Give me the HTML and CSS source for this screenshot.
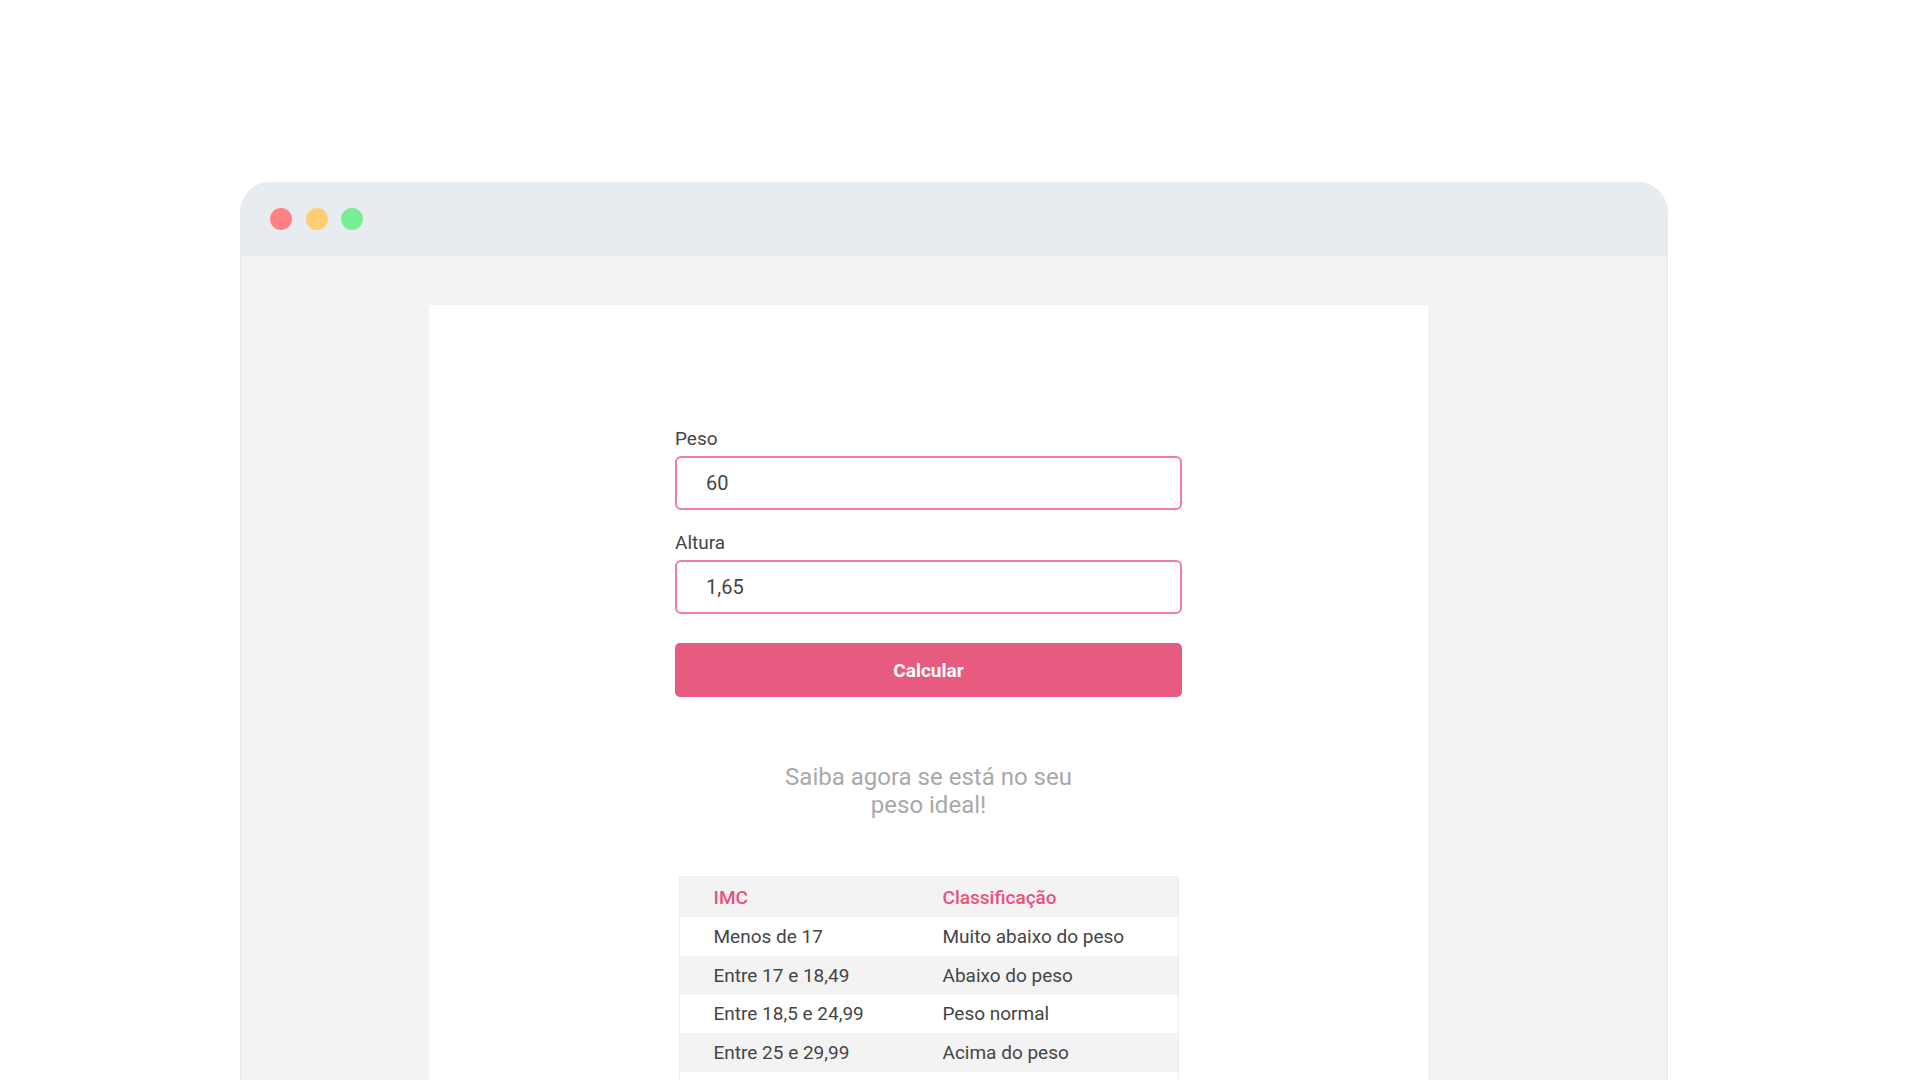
FILE: index.html
```html
<!DOCTYPE html>
<html lang="pt-BR">
<head>
<meta charset="utf-8">
<title>Calculadora de IMC</title>
<link rel="stylesheet" href="styles.css">
</head>
<body>
<div class="window">
  <div class="titlebar">
    <span class="dot dot-red"></span>
    <span class="dot dot-yellow"></span>
    <span class="dot dot-green"></span>
  </div>
  <div class="window-body">
    <main class="panel">
      <form class="form">
        <div class="field">
          <label class="label" for="peso">Peso</label>
          <input class="input" id="peso" type="text" value="60">
        </div>
        <div class="field">
          <label class="label" for="altura">Altura</label>
          <input class="input" id="altura" type="text" value="1,65">
        </div>
        <button class="button" type="button">Calcular</button>
      </form>
      <p class="tagline">Saiba agora se está no seu peso ideal!</p>
      <table class="table">
        <thead>
          <tr><th class="c1">IMC</th><th>Classificação</th></tr>
        </thead>
        <tbody>
          <tr><td class="c1">Menos de 17</td><td>Muito abaixo do peso</td></tr>
          <tr><td class="c1">Entre 17 e 18,49</td><td>Abaixo do peso</td></tr>
          <tr><td class="c1">Entre 18,5 e 24,99</td><td>Peso normal</td></tr>
          <tr><td class="c1">Entre 25 e 29,99</td><td>Acima do peso</td></tr>
          <tr class="row-empty"><td class="c1"></td><td></td></tr>
        </tbody>
      </table>
    </main>
  </div>
</div>
</body>
</html>
```
FILE: styles.css
```css
* { box-sizing: border-box; }

html, body {
  margin: 0;
  height: 1080px;
  overflow: hidden;
  background: #ffffff;
  font-family: Roboto, "Liberation Sans", sans-serif;
}

.window {
  margin: 182px 0 0 240px;
  width: 1428px;
  border-radius: 30px 30px 0 0;
  overflow: hidden;
}

.titlebar {
  height: 74px;
  background: #e7ecf0;
  display: flex;
  align-items: center;
  gap: 13.5px;
  padding-left: 30px;
}

.dot {
  width: 22px;
  height: 22px;
  border-radius: 50%;
  display: block;
}
.dot-red { background: #ff8183; }
.dot-yellow { background: #ffce71; }
.dot-green { background: #77ed94; }

.window-body {
  background: #f3f3f3;
  border-left: 1px solid #e8e8e8;
  border-right: 1px solid #e8e8e8;
  padding: 49px 240px 0 188px;
  height: 900px;
}

.panel {
  background: #ffffff;
  width: 999px;
  height: 900px;
  padding-top: 123px;
}

.form {
  width: 507px;
  margin: 0 auto;
}

.field {
  margin-bottom: 22px;
}

.label {
  display: block;
  font-size: 19px;
  line-height: 22px;
  color: #454545;
  margin-bottom: 6px;
}

.input {
  display: block;
  width: 100%;
  height: 54px;
  border: 2px solid #ef7d9d;
  border-radius: 6px;
  padding: 0 0 0 29px;
  font-family: Roboto, "Liberation Sans", sans-serif;
  font-size: 20px;
  color: #454545;
  background: #ffffff;
  outline: none;
}

.button {
  display: block;
  width: 100%;
  height: 54px;
  margin-top: 29px;
  border: none;
  border-radius: 5px;
  background: #e85b80;
  color: #ffffff;
  font-family: Roboto, "Liberation Sans", sans-serif;
  font-size: 19px;
  font-weight: 700;
}

.tagline {
  width: 300px;
  margin: 66px auto 0;
  text-align: center;
  font-size: 24px;
  line-height: 28px;
  color: #a9a9a9;
}

.table {
  width: 500px;
  margin: 57px auto 0;
  border-collapse: separate;
  border-spacing: 0;
  border: 1px solid #f0f0f0;
  border-bottom: none;
  color: #454545;
}

.table th {
  height: 40px;
  padding: 0 0 0 34px;
  background: #f3f3f3;
  color: #e9527b;
  font-size: 19px;
  font-weight: 500;
  text-align: left;
}

.table td {
  height: 38.75px;
  padding: 0 0 0 34px;
  font-size: 19px;
  text-align: left;
}

.table .c1 { width: 229px; }

.table tbody tr:nth-child(even) td {
  background: #f3f3f3;
}
```
